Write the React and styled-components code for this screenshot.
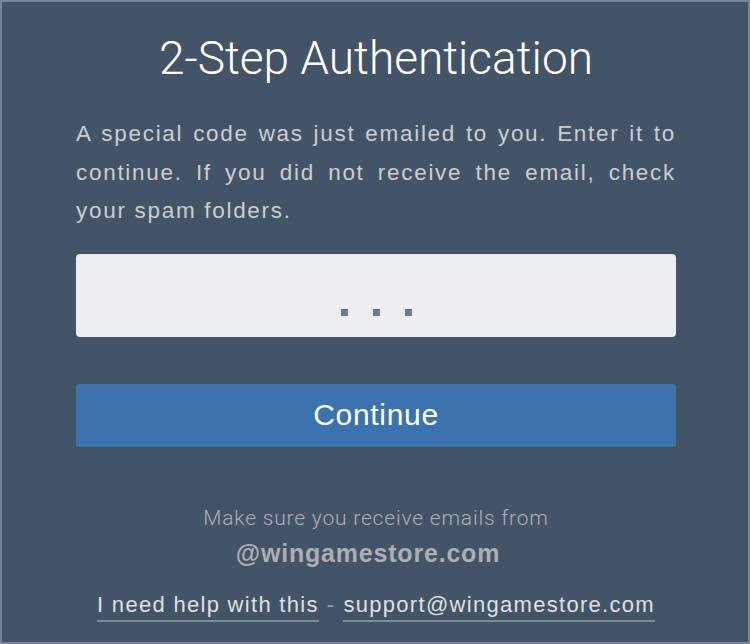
import React from 'react';
import styled, { createGlobalStyle } from 'styled-components';

const Global = createGlobalStyle`
  html, body {
    margin: 0;
    padding: 0;
    background: #435467;
  }
  * { box-sizing: border-box; }
`;

const Frame = styled.div`
  width: 750px;
  height: 644px;
  border: 2px solid #76859a;
  background: #435467;
  padding: 0 72px 0 74px;
  display: flex;
  flex-direction: column;
  align-items: stretch;
  font-family: 'Liberation Sans', Arial, sans-serif;
`;

const Title = styled.h1`
  margin: 28px 0 0;
  text-align: center;
  font-family: Roboto, 'Liberation Sans', sans-serif;
  font-weight: 300;
  font-size: 46px;
  line-height: 56px;
  color: #ffffff;
`;

const Lead = styled.p`
  margin: 29px 0 0;
  color: #c9ced4;
  font-size: 22.5px;
  line-height: 38.5px;
  text-align: justify;
  letter-spacing: 1.7px;
`;

const CodeBox = styled.div`
  margin-top: 23px;
  height: 83px;
  border-radius: 4px;
  background: #eceef1;
  display: flex;
  align-items: flex-end;
  justify-content: center;
  gap: 25px;
  padding-bottom: 21px;
`;

const Dot = styled.span`
  width: 7px;
  height: 7px;
  background: #6b7d90;
`;

const Button = styled.button`
  margin-top: 47px;
  height: 63px;
  border: none;
  border-radius: 3px;
  background: #3b73ae;
  color: #ffffff;
  font-family: 'Liberation Sans', Arial, sans-serif;
  font-size: 30px;
  letter-spacing: 0.7px;
  cursor: pointer;
`;

const Note = styled.p`
  margin: 58px 0 0;
  text-align: center;
  font-family: Roboto, 'Liberation Sans', sans-serif;
  font-weight: 300;
  font-size: 21px;
  line-height: 26px;
  letter-spacing: 0.8px;
  color: #aab1b9;
`;

const Domain = styled.div`
  margin-top: 8px;
  padding-right: 16px;
  text-align: center;
  font-weight: 700;
  font-size: 25px;
  line-height: 28px;
  letter-spacing: 0.8px;
  color: #aaafb4;
`;

const Links = styled.div`
  margin-top: 25px;
  display: flex;
  justify-content: center;
  align-items: baseline;
  gap: 8px;
  font-size: 22px;
  letter-spacing: 1.3px;
  color: #d8dce0;
`;

const Link = styled.a`
  color: #dde0e4;
  text-decoration: none;
  border-bottom: 2px solid #7d8b9b;
  padding-bottom: 2px;
`;

const Sep = styled.span`
  color: #9aa3ad;
`;

export default function App() {
  return (
    <>
      <Global />
      <Frame>
        <Title>2-Step Authentication</Title>
        <Lead>
          A special code was just emailed to you. Enter it to continue. If you did not
          receive the email, check your spam folders.
        </Lead>
        <CodeBox>
          <Dot />
          <Dot />
          <Dot />
        </CodeBox>
        <Button type="button">Continue</Button>
        <Note>Make sure you receive emails from</Note>
        <Domain>@wingamestore.com</Domain>
        <Links>
          <Link href="#">I need help with this</Link>
          <Sep>-</Sep>
          <Link href="#">support@wingamestore.com</Link>
        </Links>
      </Frame>
    </>
  );
}
